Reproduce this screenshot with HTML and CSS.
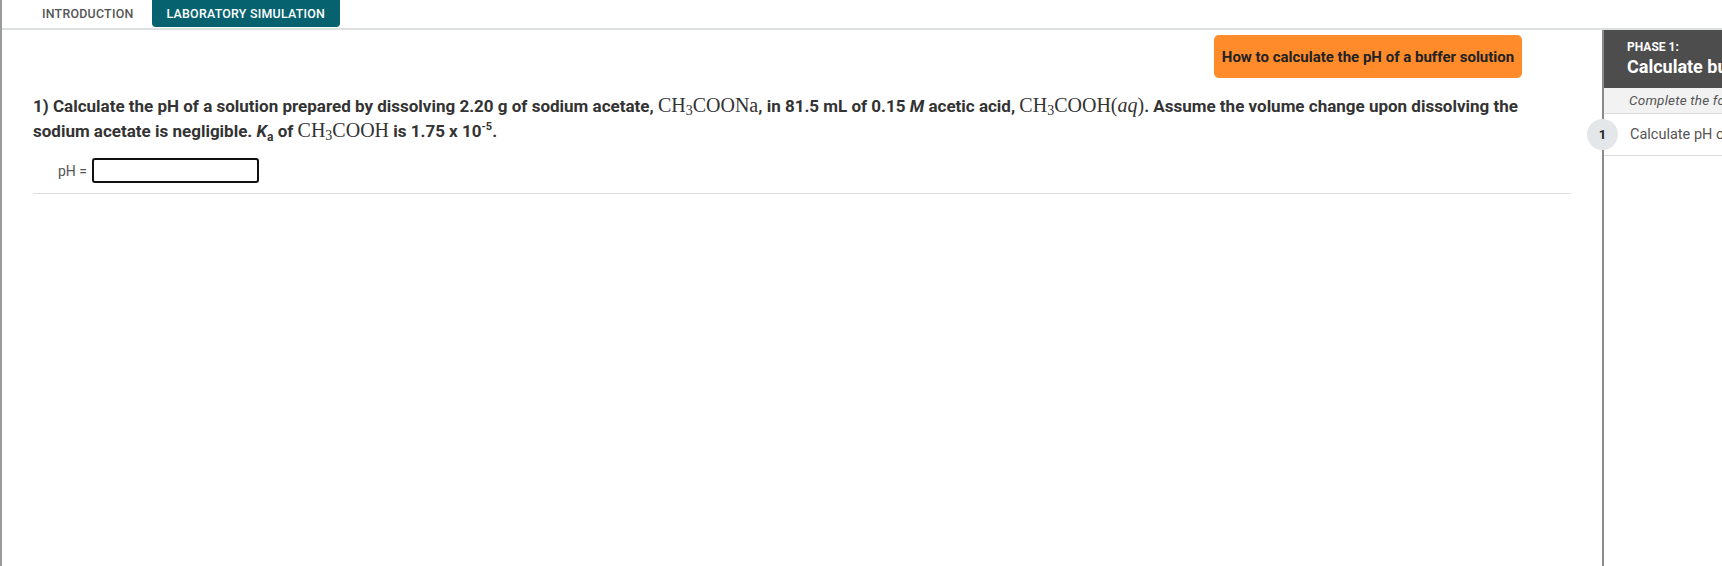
FILE: index.html
```html
<!DOCTYPE html>
<html>
<head>
    <meta name="viewport" content="width=device-width, initial-scale=1.0">
    <title>Laboratory Simulation</title>
    <link rel="stylesheet" href="styles.css">
</head>
<body>
    <div class="app">
        <div class="tabs">
            <div class="tab">Introduction</div>
            <div class="tab active">Laboratory Simulation</div>
        </div>

        <div class="main">
            <div class="content">
                <div class="help-row">
                    <button class="help-button">How to calculate the pH of a buffer solution</button>
                </div>

                <div class="question">
                    <p class="question-text">
                        1) Calculate the pH of a solution prepared by dissolving 2.20 g of sodium acetate,
                        <span class="math">CH<sub>3</sub>COONa</span>, in 81.5 mL of 0.15 <i>M</i> acetic acid,
                        <span class="math">CH<sub>3</sub>COOH(<i>aq</i>)</span>. Assume the volume change upon dissolving the
                        sodium acetate is negligible. <i>K</i><sub class="ka">a</sub> of <span class="math">CH<sub>3</sub>COOH</span> is 1.75 x 10<sup>-5</sup>.
                    </p>
                    <div class="answer-row">
                        <label for="ph">pH =</label>
                        <input id="ph" class="answer-input" type="text" autofocus>
                    </div>
                </div>
            </div>

            <div class="sidebar">
                <div class="phase-header">
                    <div class="phase-label">PHASE 1:</div>
                    <div class="phase-title">Calculate buffer pH</div>
                </div>
                <div class="phase-note">Complete the following steps:</div>
                <div class="step">
                    <span class="step-number">1</span>
                    <span class="step-text">Calculate pH of the buffer</span>
                </div>
            </div>
        </div>
    </div>
</body>
</html>
```

FILE: styles.css
```css
html, body {
    margin: 0;
    height: 100%;
    overflow: hidden;
}
body {
    font-family: Roboto, "Liberation Sans", Arial, sans-serif;
    background-color: #fff;
    color: #333;
}
.app {
    height: 100%;
    border-left: 2px solid #9a9a9a;
    display: flex;
    flex-direction: column;
}

/* top tabs */
.tabs {
    display: flex;
    gap: 3px;
    padding-left: 25px;
    height: 28px;
    border-bottom: 2px solid #dde0e0;
}
.tab {
    padding: 0 15px;
    font-size: 12.4px;
    font-weight: 500;
    letter-spacing: 0.25px;
    text-transform: uppercase;
    line-height: 27px;
    height: 27px;
    color: #555;
}
.tab.active {
    background-color: #07626f;
    color: #fff;
    border-radius: 0 0 4px 4px;
}

.main {
    flex: 1;
    display: flex;
}

/* question area */
.content {
    flex: 1;
    padding: 0 31px 0 31px;
}
.help-row {
    display: flex;
    justify-content: flex-end;
    padding: 5px 49px 0 0;
}
.help-button {
    width: 308px;
    height: 43px;
    background-color: #ff8b2a;
    color: #222;
    border: none;
    border-radius: 5px;
    font-family: Roboto, "Liberation Sans", Arial, sans-serif;
    font-size: 15px;
    font-weight: 700;
    cursor: pointer;
}
.question {
    border-bottom: 1px solid #dedede;
    padding-bottom: 10px;
}
.question-text {
    margin: 15px 0 15px 0;
    font-size: 17px;
    font-weight: 700;
    line-height: 24px;
    color: #333;
}
.math {
    font-family: "Liberation Serif", "DejaVu Serif", serif;
    font-weight: 400;
    font-size: 20px;
}
.math sub {
    font-size: 14px;
    vertical-align: -3px;
    line-height: 0;
}
sup {
    font-size: 11px;
    line-height: 0;
}
.ka {
    font-size: 12px;
    line-height: 0;
}
.answer-row {
    display: flex;
    align-items: center;
    gap: 5px;
    padding-left: 25px;
}
.answer-row label {
    font-size: 14px;
    color: #555;
}
.answer-input {
    width: 167px;
    height: 25px;
    box-sizing: border-box;
    border: 2px solid #111;
    border-radius: 3px;
    padding: 0 4px;
    outline: none;
    font-size: 14px;
}

/* right panel */
.sidebar {
    width: 118px;
    border-left: 2px solid #8a8a8a;
    position: relative;
    overflow: visible;
}
.phase-header {
    background-color: #4d4d4d;
    color: #fff;
    padding: 9px 0 0 23px;
    height: 58px;
    box-sizing: border-box;
    white-space: nowrap;
    overflow: hidden;
}
.phase-label {
    font-size: 12px;
    font-weight: 700;
    line-height: 16px;
}
.phase-title {
    font-size: 18px;
    font-weight: 700;
    line-height: 24px;
}
.phase-note {
    background-color: #f2f2f2;
    border-bottom: 1px solid #dcdcdc;
    height: 25px;
    line-height: 25px;
    padding-left: 25px;
    font-size: 13.5px;
    font-style: italic;
    letter-spacing: 0.2px;
    color: #555;
    white-space: nowrap;
    overflow: hidden;
}
.step {
    height: 41px;
    border-bottom: 1px solid #dcdcdc;
    display: flex;
    align-items: center;
    padding-left: 26px;
    white-space: nowrap;
}
.step-number {
    position: absolute;
    left: -17px;
    width: 31px;
    height: 31px;
    border-radius: 50%;
    background-color: #e3e7e9;
    font-size: 13px;
    font-weight: 700;
    color: #222;
    display: flex;
    align-items: center;
    justify-content: center;
}
.step-text {
    font-size: 14.5px;
    color: #555;
    overflow: hidden;
}
```
